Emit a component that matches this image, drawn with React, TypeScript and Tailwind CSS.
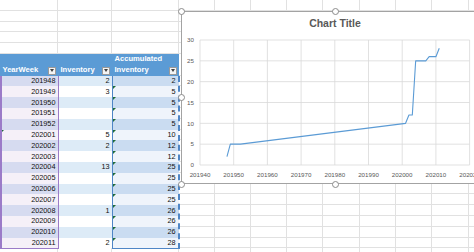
import React from "react";

const rows: [string, string, string][] = [
  ["201948", "2", "2"],
  ["201949", "3", "5"],
  ["201950", "", "5"],
  ["201951", "", "5"],
  ["201952", "", "5"],
  ["202001", "5", "10"],
  ["202002", "2", "12"],
  ["202003", "", "12"],
  ["202004", "13", "25"],
  ["202005", "", "25"],
  ["202006", "", "25"],
  ["202007", "", "25"],
  ["202008", "1", "26"],
  ["202009", "", "26"],
  ["202010", "", "26"],
  ["202011", "2", "28"],
];

const GRID = "grid grid-cols-[58px_54px_67px_35.5px_repeat(8,36.3px)]";

function Empty({ n }: { n: number }) {
  return (
    <>
      {Array.from({ length: n }).map((_, i) => (
        <div key={i} className="border-r border-b border-[#E1E1E1]" />
      ))}
    </>
  );
}

function Tri() {
  return (
    <span className="absolute left-0 top-0 w-0 h-0 border-t-[4px] border-t-[#1F6B3A] border-r-[4px] border-r-transparent" />
  );
}

function Filter() {
  return (
    <span className="absolute right-[2px] bottom-[1px] w-[8px] h-[8px] bg-[#F4F4F4] border border-[#9A9A9A] flex items-center justify-center">
      <svg width="4" height="3" viewBox="0 0 4 3">
        <path d="M0 0H4L2 3Z" fill="#404040" />
      </svg>
    </span>
  );
}

function HeaderCell({ lines }: { lines: string[] }) {
  return (
    <div className="relative bg-[#5B9BD5] text-white font-bold text-[7.6px] leading-[10.5px] flex flex-col justify-end pl-[2.5px] pb-[0.5px]">
      {lines.map((l) => (
        <span key={l} className="whitespace-nowrap">
          {l}
        </span>
      ))}
      <Filter />
    </div>
  );
}

const px = (w: number) => 18 + (w - 201940) * 3.37;
const py = (v: number) => 130 - v * (125 / 30);

function Chart() {
  const pts = rows.map((r) => [px(Number(r[0])), py(Number(r[2]))]);
  const d = pts.map((p, i) => `${i ? "L" : "M"}${p[0].toFixed(2)} ${p[1].toFixed(2)}`).join(" ");
  const xs = [0, 1, 2, 3, 4, 5, 6, 7, 8];
  const ys = [0, 5, 10, 15, 20, 25, 30];
  return (
    <div className="absolute left-[181px] top-[11px] w-[308px] h-[173px] bg-white border border-[#A3A3A3] flex flex-col">
      <div className="h-[23px] flex items-center justify-center text-[10.5px] font-bold text-[#595959]">
        Chart Title
      </div>
      <svg width="306" height="148" className="overflow-visible">
        {ys.map((v) => (
          <line key={v} x1={18} x2={18 + 8 * 33.7} y1={py(v)} y2={py(v)} stroke="#D9D9D9" strokeWidth={0.8} />
        ))}
        {xs.map((k) => (
          <line key={k} x1={18 + k * 33.7} x2={18 + k * 33.7} y1={py(30)} y2={py(0)} stroke="#D9D9D9" strokeWidth={0.8} />
        ))}
        {ys.map((v) => (
          <text key={v} x={12} y={py(v) + 2.2} textAnchor="end" fontSize="6.2" fill="#595959">
            {v}
          </text>
        ))}
        {xs.map((k) => (
          <text key={k} x={18 + k * 33.7} y={141.5} textAnchor="middle" fontSize="6.2" fill="#595959">
            {201940 + k * 10}
          </text>
        ))}
        <path d={d} fill="none" stroke="#5B9BD5" strokeWidth={1.1} strokeLinejoin="round" />
      </svg>
    </div>
  );
}

function Handle({ cls }: { cls: string }) {
  return <span className={`absolute w-[7px] h-[7px] rounded-full bg-white border border-[#8C8C8C] ${cls}`} />;
}

export default function App() {
  return (
    <div className="relative w-[474px] h-[252px] overflow-hidden bg-white font-['Liberation_Sans',sans-serif] text-black">
      <div className="flex flex-col">
        {[0, 1, 2, 3, 4].map((r) => (
          <div key={r} className={`${GRID} h-[10.8px]`}>
            <Empty n={12} />
          </div>
        ))}
        <div className={`${GRID} h-[21.6px]`}>
          <HeaderCell lines={["YearWeek"]} />
          <HeaderCell lines={["Inventory"]} />
          <HeaderCell lines={["Accumulated", "Inventory"]} />
          <Empty n={9} />
        </div>
        {rows.map((r, i) => {
          const band = i % 2 === 0;
          return (
            <div key={r[0]} className={`${GRID} h-[10.8px] text-[7.3px] leading-[10px] text-[#111]`}>
              <div className={`relative flex items-center justify-end pr-[2.5px] ${band ? "bg-[#D6DBF0]" : "bg-[#F5F0F8]"}`}>
                {i === 5 && <Tri />}
                {r[0]}
              </div>
              <div className={`relative flex items-center justify-end pr-[2.5px] ${band ? "bg-[#DDEBF7]" : "bg-white"}`}>
                {r[1]}
              </div>
              <div className={`relative flex items-center justify-end pr-[3.5px] ${band ? "bg-[#CADCF1]" : "bg-[#EFF4FB]"}`}>
                {i > 0 && <Tri />}
                {r[2]}
              </div>
              <Empty n={9} />
            </div>
          );
        })}
        <div className={`${GRID} h-[10.8px]`}>
          <Empty n={12} />
        </div>
      </div>

      {/* source-data highlights */}
      <div className="absolute left-0 top-[75.6px] w-[59px] h-[173px] border-l-2 border-r border-b border-[#9B7BC8]" />
      <div className="absolute left-[112px] top-[75.6px] w-[67px] h-[173px] border-l border-b border-[#4F86C6]" />
      <div className="absolute left-[177.5px] top-[75.6px] w-[2px] h-[173px] border-l-2 border-dashed border-[#4F86C6]" />

      <Chart />

      <Handle cls="left-[177.5px] top-[7.5px]" />
      <Handle cls="left-[331.5px] top-[7.5px]" />
      <Handle cls="left-[177.5px] top-[94px]" />
      <Handle cls="left-[177.5px] top-[180.5px]" />
      <Handle cls="left-[331.5px] top-[180.5px]" />
    </div>
  );
}
